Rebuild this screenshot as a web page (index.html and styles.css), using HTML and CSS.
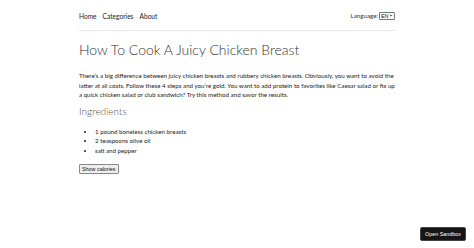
FILE: index.html
```html
<!DOCTYPE html>
<html lang="en">
  <head>
    <meta charset="UTF-8" />
    <meta name="viewport" content="width=device-width, initial-scale=1.0" />
    <title>How To Cook A Juicy Chicken Breast</title>
    <link rel="stylesheet" href="styles.css">
  </head>
  <body>
    <div class="container">
      <div class="head flex space">
        <div class="nav flex">
          <a href="#">Home</a>
          <a href="#">Categories</a>
          <a href="#">About</a>
        </div>
        <div class="lang flex">
          <label for="lang">Language:</label>
          <div class="select">
            <select id="lang">
              <option>EN</option>
            </select>
            <svg viewBox="0 0 6 4" width="4" height="3"><path d="M1 1 L3 3 L5 1" fill="none" stroke="#222" stroke-width="1.2"/></svg>
          </div>
        </div>
      </div>
      <div class="main">
        <h1>How To Cook A Juicy Chicken Breast</h1>
        <p>There’s a big difference between juicy chicken breasts and rubbery chicken breasts. Obviously, you want to avoid the latter at all costs. Follow these 4 steps and you’re gold. You want to add protein to favorites like Caesar salad or fix up a quick chicken salad or club sandwich? Try this method and savor the results.</p>
        <h2>Ingredients</h2>
        <ul class="list">
          <li>1 pound boneless chicken breasts</li>
          <li>2 teaspoons olive oil</li>
          <li>salt and pepper</li>
        </ul>
        <button class="calories">Show calories</button>
      </div>
    </div>
    <button class="sandbox">Open Sandbox</button>
  </body>
</html>
```

FILE: styles.css
```css
* {
  margin: 0;
  padding: 0;
  box-sizing: border-box;
}
body {
  font-family: Lato, "Open Sans", sans-serif;
  color: #222;
  background: #fff;
}
.flex {
  display: flex;
}
.space {
  justify-content: space-between;
  align-items: center;
}

.container {
  width: 316px;
  margin-left: 79px;
}
.container .head {
  height: 31px;
  padding-top: 1px;
  border-bottom: 1px solid #e6e6e6;
}
.container .head .nav a {
  font-family: Lato, sans-serif;
  font-size: 6.6px;
  color: #222;
  text-decoration: none;
  margin-right: 6px;
}
.container .head .lang {
  align-items: center;
  font-family: Lato, sans-serif;
  font-size: 6.2px;
  color: #333;
}
.container .head .lang .select {
  position: relative;
  margin-left: 1px;
}
.container .head .lang select {
  appearance: none;
  -webkit-appearance: none;
  display: block;
  font-size: 5.4px;
  height: 8px;
  width: 16px;
  padding: 0 0 0 1px;
  line-height: 6px;
  border: 1px solid #777;
  border-radius: 1px;
  background: #fff;
  color: #111;
  font-family: "Liberation Sans", Arial, sans-serif;
}
.container .head .lang svg {
  position: absolute;
  right: 2px;
  top: 2.5px;
}

.container .main h1 {
  font-size: 14px;
  font-weight: 300;
  color: #333;
  margin-top: 10px;
  line-height: 17px;
}
.container .main p {
  font-size: 6.2px;
  line-height: 9.5px;
  margin-top: 13px;
  color: #222;
}
.container .main h2 {
  font-size: 10px;
  font-weight: 300;
  color: #555;
  margin-top: 5px;
  line-height: 12px;
}
.container .main .list {
  margin-top: 10px;
  padding-left: 16px;
  font-size: 6.2px;
  line-height: 9.5px;
}
.container .main .calories {
  margin-top: 1px;
  font-family: "Liberation Sans", Arial, sans-serif;
  font-size: 5.4px;
  padding: 1px 2px;
  border: 1px solid #888;
  border-radius: 1px;
  background: #efefef;
  color: #111;
}

.sandbox {
  position: fixed;
  right: 8px;
  bottom: 7px;
  background: #151515;
  color: #fff;
  border: 1px solid #444;
  border-radius: 2px;
  font-family: "Liberation Sans", Arial, sans-serif;
  font-size: 5.4px;
  padding: 3px 4px;
}
```
